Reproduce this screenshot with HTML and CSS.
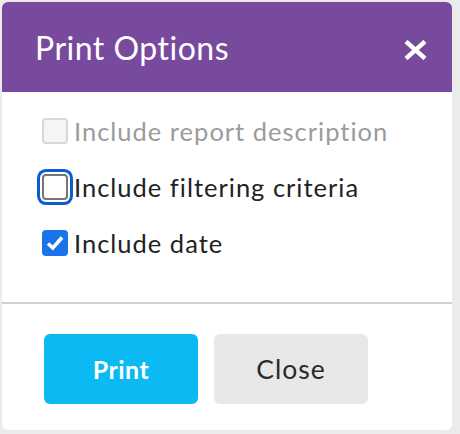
FILE: index.html
```html
<!DOCTYPE html>
<html>
<head>
<meta charset="utf-8">
<link rel="stylesheet" href="styles.css">
</head>
<body>
<div class="dialog">
  <div class="header">
    <h1 class="title">Print Options</h1>
    <span class="close-x" aria-label="Close">
      <svg width="25" height="20" viewBox="0 0 25 20"><path d="M3 1.5 L22 18.5 M22 1.5 L3 18.5" stroke="#fff" stroke-width="4.4" stroke-linecap="butt"/></svg>
    </span>
  </div>
  <div class="options">
    <label class="opt disabled"><span class="box box-disabled"></span><span class="lbl">Include report description</span></label>
    <label class="opt"><span class="box box-focus"></span><span class="lbl">Include filtering criteria</span></label>
    <label class="opt"><span class="box box-checked"><svg width="26" height="26" viewBox="0 0 26 26"><path d="M6 13.5 L10.8 18 L20 7.5" fill="none" stroke="#fff" stroke-width="3.6"/></svg></span><span class="lbl">Include date</span></label>
  </div>
  <div class="footer">
    <button class="btn btn-primary">Print</button>
    <button class="btn btn-secondary">Close</button>
  </div>
</div>
</body>
</html>
```
FILE: styles.css
```css
html, body {
  margin: 0;
  padding: 0;
}
body {
  background: #ebebeb;
  font-family: Lato, "Open Sans", "Liberation Sans", sans-serif;
  width: 460px;
  height: 434px;
  overflow: hidden;
}
.dialog {
  margin: 2px 0 0 2px;
  width: 450px;
  height: 428px;
  background: #fff;
  border-radius: 6px;
  overflow: hidden;
  display: flex;
  flex-direction: column;
}
.header {
  height: 90px;
  flex: none;
  background: #774a9d;
  display: flex;
  align-items: center;
  justify-content: space-between;
  padding: 0 24px 0 33px;
  box-sizing: border-box;
}
.title {
  margin: 0;
  color: #fff;
  font-size: 32px;
  font-weight: 400;
  letter-spacing: 0.5px;
}
.close-x {
  display: flex;
  margin-top: 6px;
}
.options {
  height: 184px;
  flex: none;
  border-bottom: 2px solid #cfcfcf;
  padding: 26px 0 0 40px;
  display: flex;
  flex-direction: column;
  gap: 30px;
}
.opt {
  display: flex;
  align-items: center;
  height: 26px;
  font-size: 25.5px;
  letter-spacing: 1px;
  color: #222;
}
.opt.disabled {
  color: #9b9b9b;
}
.box {
  width: 26px;
  height: 26px;
  box-sizing: border-box;
  border-radius: 4px;
  margin-right: 6px;
  flex: none;
  display: flex;
}
.box-disabled {
  background: #f5f5f5;
  border: 2px solid #d8d8d8;
}
.box-focus {
  background: #fff;
  border: 2px solid #767676;
  box-shadow: 0 0 0 2px #fff, 0 0 0 5px #0b5ccf;
}
.box-checked {
  background: #1a73e8;
}
.lbl {
  line-height: 26px;
}
.footer {
  display: flex;
  gap: 16px;
  padding: 30px 0 0 42px;
}
.btn {
  width: 154px;
  height: 70px;
  border: none;
  border-radius: 6px;
  font-family: Lato, "Open Sans", "Liberation Sans", sans-serif;
  font-size: 25px;
  cursor: pointer;
  padding: 0;
}
.btn-primary {
  background: #0bb9f3;
  color: #fff;
  font-weight: 700;
  letter-spacing: 0.5px;
}
.btn-secondary {
  background: #e8e8e8;
  color: #2a2a2a;
  font-weight: 400;
  font-size: 26.5px;
  letter-spacing: 1px;
}
```
